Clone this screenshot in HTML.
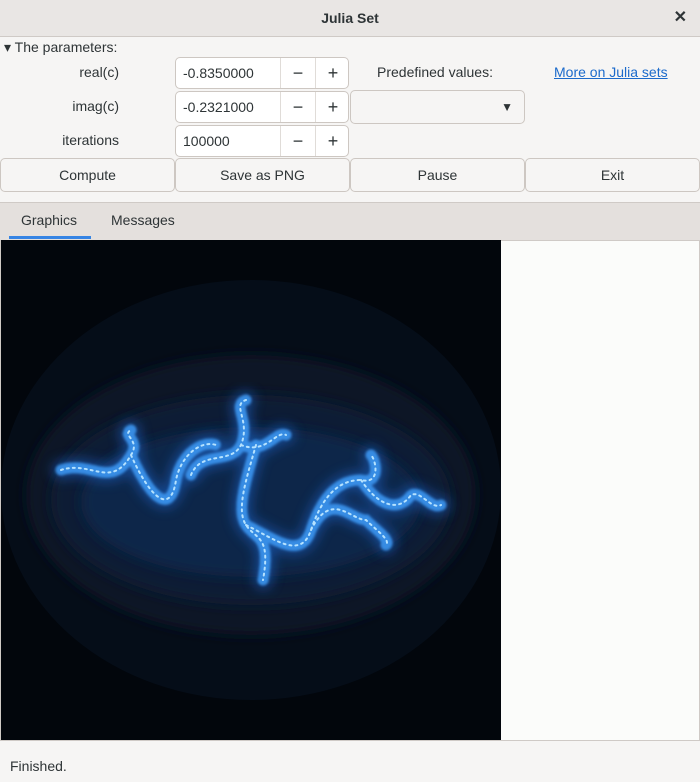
<!DOCTYPE html>
<html><head><style>
body{margin:0;width:700px;height:782px;background:#f6f5f4;font-family:"Liberation Sans",sans-serif;font-size:14px;color:#2e3436;position:relative;overflow:hidden}
.a{position:absolute}
.title{left:0;top:0;width:700px;height:36px;background:#e9e6e4;border-bottom:1px solid #cfcac6;text-align:center;line-height:36px;font-weight:bold;font-size:14px}
.lbl{text-align:right;width:119px;left:0}
.spin{left:175px;width:174px;height:32px;border:1px solid #cdc7c2;border-radius:5px;background:#fff;box-sizing:border-box}
.spin span{position:absolute;top:7px;left:7px}
.spin i{position:absolute;top:0;width:34px;height:30px;border-left:1px solid #e0dcd8;font-style:normal;text-align:center;line-height:30px;font-size:18px}
.btn{top:158px;height:34px;border:1px solid #cdc7c2;border-radius:5px;background:#f6f5f4;box-sizing:border-box;text-align:center;line-height:32px}
</style></head><body>
<div class="a title">Julia Set<span style="position:absolute;right:13px;font-size:16px">✕</span></div>
<div class="a" style="left:4px;top:39px">▾ The parameters:</div>
<div class="a lbl" style="top:64px">real(c)</div>
<div class="a lbl" style="top:98px">imag(c)</div>
<div class="a lbl" style="top:132px">iterations</div>
<div class="a spin" style="top:57px"><span>-0.8350000</span><i style="left:104px">−</i><i style="left:139px">+</i></div>
<div class="a spin" style="top:91px"><span>-0.2321000</span><i style="left:104px">−</i><i style="left:139px">+</i></div>
<div class="a spin" style="top:125px"><span>100000</span><i style="left:104px">−</i><i style="left:139px">+</i></div>
<div class="a" style="left:377px;top:64px">Predefined values:</div>
<div class="a" style="left:554px;top:64px;color:#1b6acb;text-decoration:underline">More on Julia sets</div>
<div class="a" style="left:350px;top:90px;width:175px;height:34px;border:1px solid #cdc7c2;border-radius:5px;box-sizing:border-box"><span style="position:absolute;right:11px;top:9px;font-size:12px">▼</span></div>
<div class="a btn" style="left:0;width:175px">Compute</div>
<div class="a btn" style="left:175px;width:175px">Save as PNG</div>
<div class="a btn" style="left:350px;width:175px">Pause</div>
<div class="a btn" style="left:525px;width:175px">Exit</div>
<div class="a" style="left:0;top:202px;width:700px;height:38px;background:#e4e0dd;border-top:1px solid #cfcac6"></div>
<div class="a" style="left:21px;top:212px">Graphics</div>
<div class="a" style="left:111px;top:212px">Messages</div>
<div class="a" style="left:9px;top:236px;width:82px;height:3px;background:#3584e4"></div>
<div class="a" style="left:0;top:240px;width:700px;height:501px;background:#fbfcfa;border:1px solid #cfcac6;box-sizing:border-box"></div>
<svg class="a" style="left:1px;top:240px" width="500" height="500" viewBox="0 0 500 500">
<defs><filter id="b"><feGaussianBlur stdDeviation="6"/></filter><filter id="b2"><feGaussianBlur stdDeviation="1.2"/></filter></defs>
<rect width="500" height="500" fill="#02060c"/>
<ellipse cx="250" cy="250" rx="250" ry="210" fill="#050d18"/>
<ellipse cx="250" cy="255" rx="225" ry="140" fill="#081526" filter="url(#b)"/>
<ellipse cx="250" cy="260" rx="200" ry="105" fill="#0b1d36" filter="url(#b)"/>
<ellipse cx="250" cy="262" rx="170" ry="75" fill="#0e2648" filter="url(#b)"/>
<g fill="none" stroke-linecap="round">
<path d="M60 230 C90 220,110 250,130 215 C140 200,120 195,130 190 M130 215 C150 260,170 275,175 240 C180 215,200 200,215 205 M190 235 C200 210,230 225,240 205 C250 180,230 165,245 160 M240 205 C265 215,275 190,285 195 M255 205 C245 240,235 270,245 285 C255 300,270 295,262 340 M245 285 C275 300,300 320,310 290 C320 260,335 240,360 240 C380 245,375 220,370 215 M310 290 C330 250,350 280,365 280 C375 290,390 300,385 305 M360 240 C380 270,400 270,410 255 C420 250,430 270,440 265" stroke="#1d5fbf" stroke-width="18" filter="url(#b)" opacity=".6"/>
<path d="M60 230 C90 220,110 250,130 215 C140 200,120 195,130 190 M130 215 C150 260,170 275,175 240 C180 215,200 200,215 205 M190 235 C200 210,230 225,240 205 C250 180,230 165,245 160 M240 205 C265 215,275 190,285 195 M255 205 C245 240,235 270,245 285 C255 300,270 295,262 340 M245 285 C275 300,300 320,310 290 C320 260,335 240,360 240 C380 245,375 220,370 215 M310 290 C330 250,350 280,365 280 C375 290,390 300,385 305 M360 240 C380 270,400 270,410 255 C420 250,430 270,440 265" stroke="#3d9af5" stroke-width="11" stroke-dasharray="3 2 5 3" filter="url(#b2)" opacity=".85"/>
<path d="M60 230 C90 220,110 250,130 215 C140 200,120 195,130 190 M130 215 C150 260,170 275,175 240 C180 215,200 200,215 205 M190 235 C200 210,230 225,240 205 C250 180,230 165,245 160 M240 205 C265 215,275 190,285 195 M255 205 C245 240,235 270,245 285 C255 300,270 295,262 340 M245 285 C275 300,300 320,310 290 C320 260,335 240,360 240 C380 245,375 220,370 215 M310 290 C330 250,350 280,365 280 C375 290,390 300,385 305 M360 240 C380 270,400 270,410 255 C420 250,430 270,440 265" stroke="#b5e2ff" stroke-width="2" stroke-dasharray="2 4"/>
</g>
</svg>
<div class="a" style="left:10px;top:758px">Finished.</div>
</body></html>
